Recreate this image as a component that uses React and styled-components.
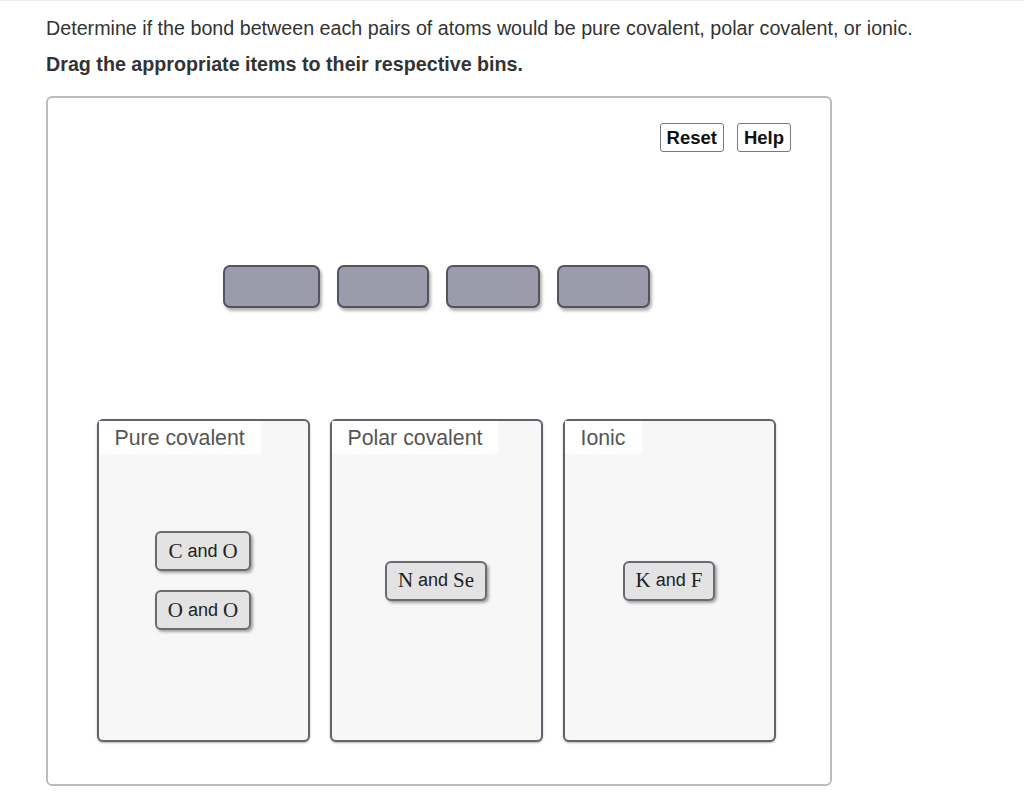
import React from 'react';
import styled, { createGlobalStyle } from 'styled-components';

const GlobalStyle = createGlobalStyle`
   body{
      margin:0;
      background:#fff;
      color:#333;
      font-family:"Liberation Sans", Arial, Helvetica, sans-serif;
   }
`;

const Page = styled.div`
   border-top:1px solid #ededed;
   padding:15px 0 0 46px;
`;

const Prompt = styled.p`
   margin:0;
   font-size:19.7px;
   line-height:24px;
   font-weight:${p => (p.$bold ? 700 : 400)};
   margin-bottom:${p => p.$gap || 0}px;
`;

const Board = styled.div`
   box-sizing:border-box;
   width:786px;
   height:690px;
   border:2px solid #bcbcbc;
   border-radius:6px;
   padding:25px 0 0 0;
`;

const Toolbar = styled.div`
   display:flex;
   justify-content:flex-end;
   gap:13px;
   padding-right:39px;
`;

const ToolButton = styled.button`
   box-sizing:border-box;
   margin:0;
   height:29px;
   padding:0 6px;
   background:#fff;
   border:1px solid #7a7a7a;
   border-radius:3px;
   font-family:"Liberation Sans", Arial, sans-serif;
   font-weight:700;
   font-size:18.5px;
   color:#111;
`;

const BlankRow = styled.div`
   display:flex;
   justify-content:center;
   gap:17px;
   padding-right:6px;
   margin-top:113px;
`;

const Blank = styled.div`
   box-sizing:border-box;
   width:${p => p.$w}px;
   height:43px;
   background:#9c9bab;
   border:2px solid #54545f;
   border-radius:7px;
   box-shadow:2px 3px 3px rgba(0,0,0,.3);
`;

const BinRow = styled.div`
   display:flex;
   justify-content:center;
   gap:20px;
   padding-right:6px;
   margin-top:111px;
`;

const Bin = styled.div`
   box-sizing:border-box;
   width:213px;
   height:323px;
   background:#f7f7f7;
   border:2px solid #62626c;
   border-radius:6px;
   box-shadow:0 1px 2px rgba(0,0,0,.3);
   display:grid;
   grid-template:1fr / 1fr;
`;

const BinLabel = styled.div`
   grid-area:1 / 1;
   justify-self:start;
   align-self:start;
   background:#fff;
   color:#555;
   font-size:21.3px;
   line-height:32px;
   padding:1px 16px 0;
`;

const Stack = styled.div`
   grid-area:1 / 1;
   justify-self:center;
   align-self:center;
   display:flex;
   flex-direction:column;
   align-items:center;
   gap:19px;
`;

const Item = styled.div`
   box-sizing:border-box;
   height:40px;
   padding:0 11px;
   display:flex;
   align-items:center;
   gap:5px;
   background:#e3e3e3;
   border:2px solid #6a6a75;
   border-radius:6px;
   box-shadow:2px 2px 3px rgba(0,0,0,.35);
   color:#222;
   font-size:18px;
`;

const Sym = styled.span`
   font-family:"Liberation Serif", "Times New Roman", serif;
   font-size:21px;
`;

const Pair = ({ a, b }) => (
   <Item>
      <Sym>{a}</Sym>
      <span>and</span>
      <Sym>{b}</Sym>
   </Item>
);

const bins = [
   { label: 'Pure covalent', items: [['C', 'O'], ['O', 'O']] },
   { label: 'Polar covalent', items: [['N', 'Se']] },
   { label: 'Ionic', items: [['K', 'F']] },
];

const App = () => {
   return (
      <Page>
         <GlobalStyle />
         <Prompt $gap={12}>Determine if the bond between each pairs of atoms would be pure covalent, polar covalent, or ionic.</Prompt>
         <Prompt $bold $gap={20}>Drag the appropriate items to their respective bins.</Prompt>
         <Board>
            <Toolbar>
               <ToolButton>Reset</ToolButton>
               <ToolButton>Help</ToolButton>
            </Toolbar>
            <BlankRow>
               <Blank $w={97} />
               <Blank $w={92} />
               <Blank $w={94} />
               <Blank $w={93} />
            </BlankRow>
            <BinRow>
               {bins.map(bin => (
                  <Bin key={bin.label}>
                     <BinLabel>{bin.label}</BinLabel>
                     <Stack>
                        {bin.items.map(([a, b]) => <Pair key={a + b} a={a} b={b} />)}
                     </Stack>
                  </Bin>
               ))}
            </BinRow>
         </Board>
      </Page>
   );
};

export default App;
